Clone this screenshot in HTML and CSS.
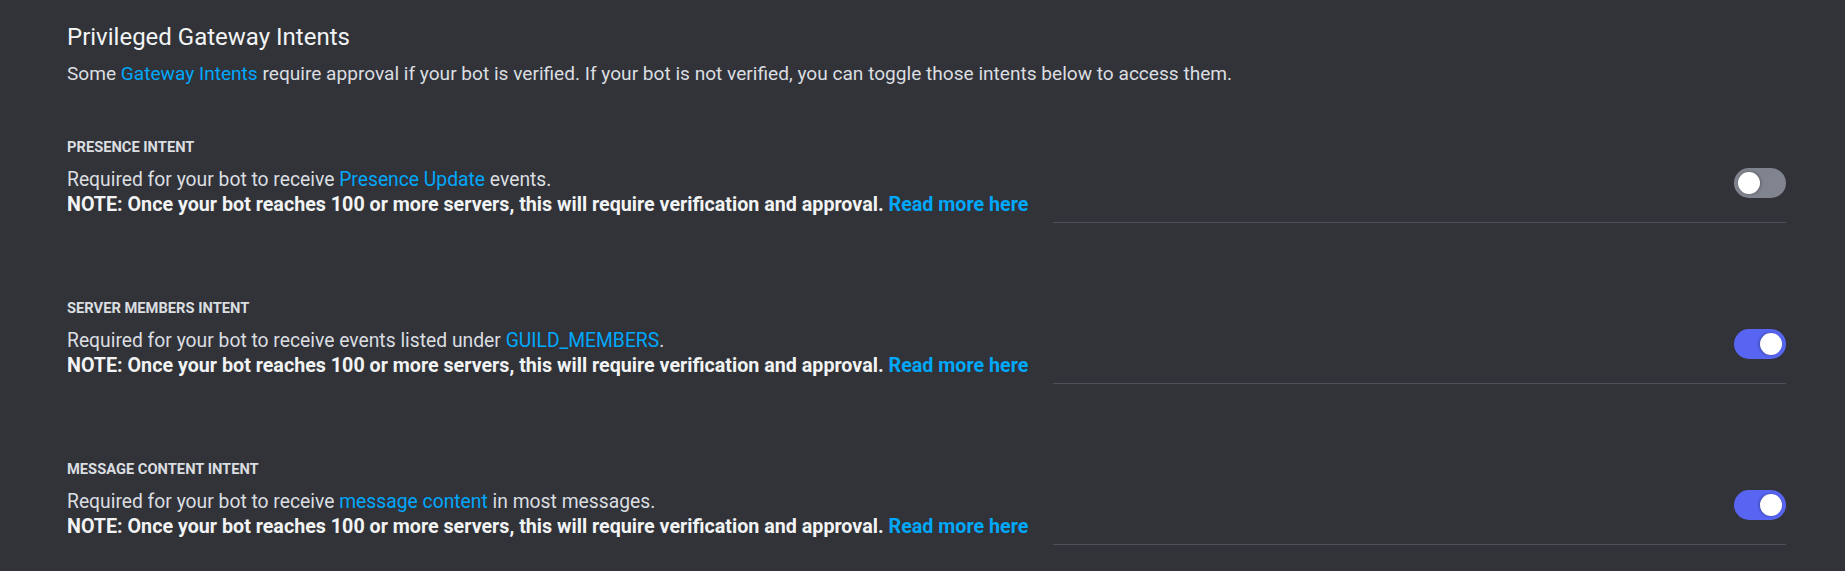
FILE: index.html
```html
<!DOCTYPE html>
<html lang="en">
<head>
<meta charset="utf-8">
<title>Privileged Gateway Intents</title>
<link rel="stylesheet" href="styles.css">
</head>
<body>
<main class="page">
  <h2 class="title">Privileged Gateway Intents</h2>
  <p class="intro">Some <a class="link" href="#">Gateway Intents</a> require approval if your bot is verified. If your bot is not verified, you can toggle those intents below to access them.</p>

  <section class="intent">
    <h3 class="label">Presence Intent</h3>
    <div class="intent-row">
      <div class="intent-text">
        <div class="line">Required for your bot to receive <a class="link" href="#">Presence Update</a> events.</div>
        <div class="note">NOTE: Once your bot reaches 100 or more servers, this will require verification and approval. <a class="link" href="#">Read more here</a></div>
      </div>
      <div class="toggle"><span class="thumb"></span></div>
    </div>
    <div class="divider"></div>
  </section>

  <section class="intent">
    <h3 class="label">Server Members Intent</h3>
    <div class="intent-row">
      <div class="intent-text">
        <div class="line">Required for your bot to receive events listed under <a class="link" href="#">GUILD_MEMBERS</a>.</div>
        <div class="note">NOTE: Once your bot reaches 100 or more servers, this will require verification and approval. <a class="link" href="#">Read more here</a></div>
      </div>
      <div class="toggle on"><span class="thumb"></span></div>
    </div>
    <div class="divider"></div>
  </section>

  <section class="intent">
    <h3 class="label">Message Content Intent</h3>
    <div class="intent-row">
      <div class="intent-text">
        <div class="line">Required for your bot to receive <a class="link" href="#">message content</a> in most messages.</div>
        <div class="note">NOTE: Once your bot reaches 100 or more servers, this will require verification and approval. <a class="link" href="#">Read more here</a></div>
      </div>
      <div class="toggle on"><span class="thumb"></span></div>
    </div>
    <div class="divider"></div>
  </section>
</main>
</body>
</html>
```

FILE: styles.css
```css
html, body {
  margin: 0;
  padding: 0;
  background: #313338;
}

body {
  font-family: Roboto, "Noto Sans", "Liberation Sans", sans-serif;
  color: #dbdee1;
}

.page {
  padding: 22px 59px 0 67px;
}

.title {
  margin: 0;
  font-size: 24px;
  line-height: 30px;
  font-weight: 400;
  color: #f2f3f5;
}

.intro {
  margin: 9px 0 0;
  font-size: 19.1px;
  line-height: 25px;
  color: #dbdee1;
}

.link {
  color: #00a8fc;
  text-decoration: none;
}

.intent {
  display: flex;
  flex-direction: column;
}

.intro + .intent {
  margin-top: 51px;
}

.intent + .intent {
  margin-top: 75px;
}

.label {
  margin: 0;
  font-size: 14.7px;
  line-height: 20px;
  font-weight: 700;
  text-transform: uppercase;
  color: #dbdee1;
}

.intent-row {
  display: flex;
  align-items: flex-start;
  justify-content: space-between;
  margin-top: 11px;
}

.intent-text {
  line-height: 24.5px;
}

.line {
  font-size: 19.3px;
}

.note {
  font-size: 19.7px;
  font-weight: 700;
  color: #f2f3f5;
}

.toggle {
  flex: none;
  position: relative;
  width: 52px;
  height: 30px;
  border-radius: 15px;
  background: #80848e;
}

.toggle .thumb {
  position: absolute;
  top: 4px;
  left: 4px;
  width: 22px;
  height: 22px;
  border-radius: 50%;
  background: #ffffff;
  box-shadow: 1px 0 3px rgba(0, 0, 0, 0.3);
}

.toggle.on {
  background: #5865f2;
}

.toggle.on .thumb {
  left: 26px;
  box-shadow: -1px 0 3px rgba(0, 0, 0, 0.3);
}

.divider {
  align-self: flex-end;
  width: 733px;
  height: 1px;
  margin-top: 5px;
  background: #4e5058;
}
```
